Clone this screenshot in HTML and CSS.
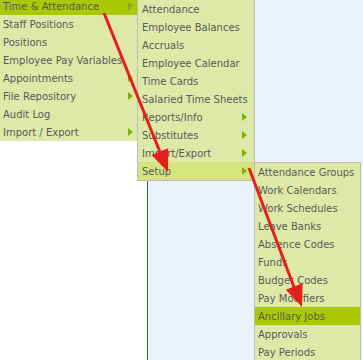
FILE: index.html
```html
<!DOCTYPE html>
<html>
<head>
  <title>Menu</title>
  <link rel="stylesheet" href="styles.css">
</head>
<body>
  <div class="page">
    <div class="blank"></div>
    <div class="panel"></div>
  </div>

  <ul class="menu menu-main">
    <li class="item has-sub active"><span>Time &amp; Attendance</span><i class="tri"></i>
      <ul class="menu menu-sub">
        <li class="item"><span>Attendance</span></li>
        <li class="item"><span>Employee Balances</span></li>
        <li class="item"><span>Accruals</span></li>
        <li class="item"><span>Employee Calendar</span></li>
        <li class="item"><span>Time Cards</span></li>
        <li class="item"><span>Salaried Time Sheets</span></li>
        <li class="item has-sub"><span>Reports/Info</span><i class="tri"></i></li>
        <li class="item has-sub"><span>Substitutes</span><i class="tri"></i></li>
        <li class="item has-sub"><span>Import/Export</span><i class="tri"></i></li>
        <li class="item has-sub hover"><span>Setup</span><i class="tri"></i>
          <ul class="menu menu-setup">
            <li class="item"><span>Attendance Groups</span></li>
            <li class="item"><span>Work Calendars</span></li>
            <li class="item"><span>Work Schedules</span></li>
            <li class="item"><span>Leave Banks</span></li>
            <li class="item"><span>Absence Codes</span></li>
            <li class="item"><span>Funds</span></li>
            <li class="item"><span>Budget Codes</span></li>
            <li class="item"><span>Pay Modifiers</span></li>
            <li class="item active"><span>Ancillary Jobs</span></li>
            <li class="item"><span>Approvals</span></li>
            <li class="item"><span>Pay Periods</span></li>
          </ul>
        </li>
      </ul>
    </li>
    <li class="item"><span>Staff Positions</span></li>
    <li class="item"><span>Positions</span></li>
    <li class="item"><span>Employee Pay Variables</span></li>
    <li class="item has-sub"><span>Appointments</span><i class="tri"></i></li>
    <li class="item has-sub"><span>File Repository</span><i class="tri"></i></li>
    <li class="item"><span>Audit Log</span></li>
    <li class="item has-sub"><span>Import / Export</span><i class="tri"></i></li>
  </ul>

  <svg class="arrows" width="363" height="360" viewBox="0 0 363 360">
    <line x1="104" y1="13" x2="160" y2="152" />
    <polygon points="168,172 168.2,148.2 151.5,155" />
    <line x1="249" y1="168" x2="294" y2="287" />
    <polygon points="302,307 302.6,283.3 285.8,289.7" />
  </svg>
</body>
</html>
```

FILE: styles.css
```css
html, body {
  margin: 0;
  padding: 0;
  width: 363px;
  height: 360px;
  overflow: hidden;
  background: #ffffff;
  font-family: "DejaVu Sans", Verdana, sans-serif;
  font-size: 10px;
  color: #595959;
}
.page {
  display: flex;
  height: 360px;
}
.blank {
  width: 147px;
  background: #ffffff;
}
.panel {
  flex: 1;
  border-left: 1px solid #3d6a14;
  background: #ebf2fa;
}

ul.menu {
  list-style: none;
  margin: 0;
  padding: 0;
  background: #dee9a8;
  box-sizing: border-box;
}
.menu-main {
  position: absolute;
  top: -3px;
  left: 0;
  width: 137px;
}
.menu-sub {
  position: absolute;
  top: 3px;
  left: 100%;
  width: 118px;
  border: 1px solid #bdbdbd;
  border-top: none;
}
.menu-setup {
  position: absolute;
  top: 0;
  left: 100%;
  width: 107px;
  border: 1px solid #bdbdbd;
}
.item {
  position: relative;
  display: flex;
  align-items: center;
  justify-content: space-between;
  height: 18px;
  padding: 0 4px 0 3px;
  white-space: nowrap;
}
.menu-sub > .item {
  padding-left: 4px;
}
.menu-sub > .item > .tri {
  margin-right: 3px;
}
.menu-main > .item.active {
  background: #abc806;
}
.menu-setup > .item.active {
  background: #acc900;
}
.item.hover {
  background: #d5e47c;
}
.tri {
  width: 0;
  height: 0;
  border-left: 5px solid #7db300;
  border-top: 4px solid transparent;
  border-bottom: 4px solid transparent;
}
.active > .tri {
  border-left-color: #8aa62c;
}

.arrows {
  position: absolute;
  top: 0;
  left: 0;
  pointer-events: none;
}
.arrows line {
  stroke: #e5201c;
  stroke-width: 3;
}
.arrows polygon {
  fill: #e5201c;
}
```
